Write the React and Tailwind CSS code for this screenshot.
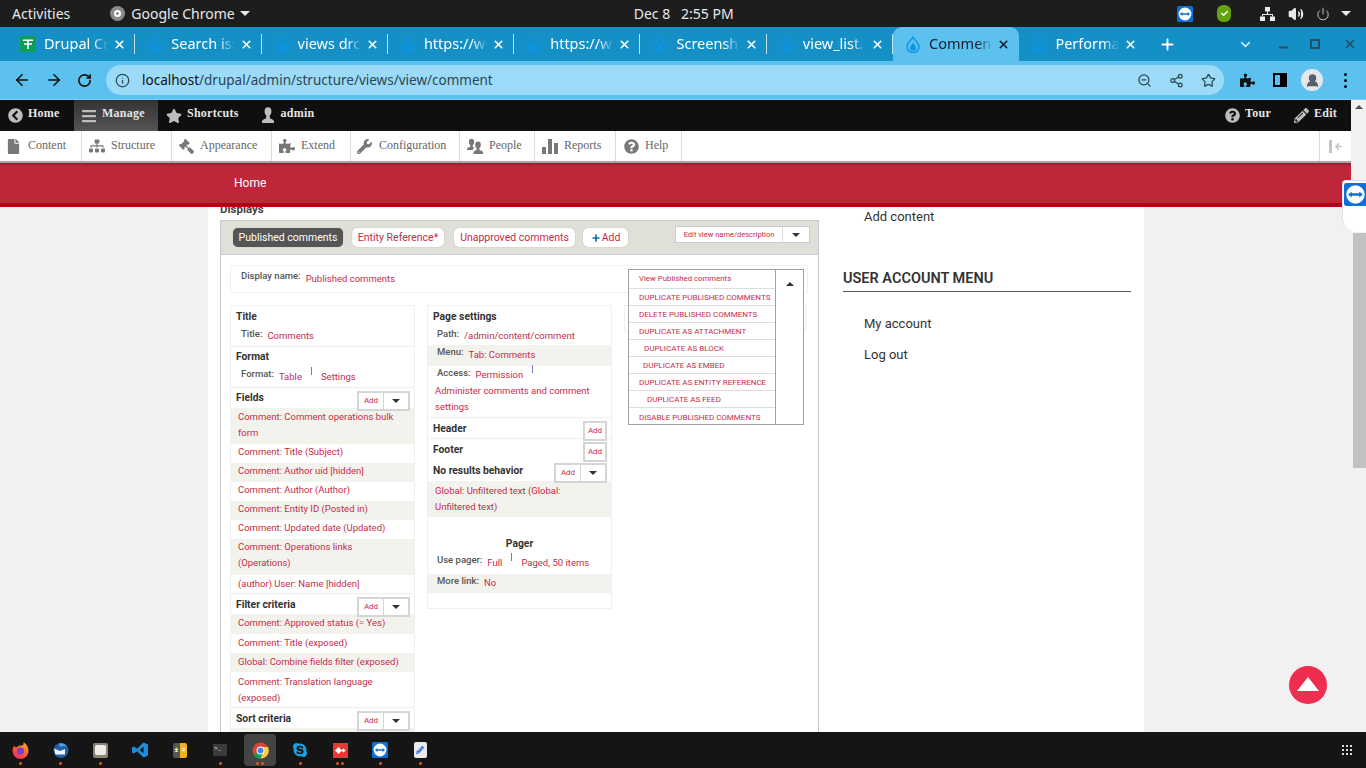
import React from "react";
import {
  ArrowLeft,
  ArrowRight,
  RotateCw,
  Info,
  ZoomOut,
  Share2,
  Star,
  Plus,
  ChevronDown,
  X,
  Minus,
  Volume2,
  Power,
  UserRound,
} from "lucide-react";
import {
  FaChevronCircleLeft,
  FaBars,
  FaStar,
  FaQuestionCircle,
  FaPencilAlt,
  FaFile,
  FaSitemap,
  FaGavel,
  FaPuzzlePiece,
  FaWrench,
  FaSkype,
  FaCheck,
} from "react-icons/fa";

const Drop = () => (
  <svg width="14" height="17" viewBox="0 0 14 17" className="shrink-0">
    <path d="M7 1C8 4 13 6 13 11A6 5.5 0 0 1 1 11C1 6 6 4 7 1Z" fill="none" stroke="#0b95e6" strokeWidth="1.4" />
    <path d="M7 6.5C8 8.5 10 9.8 10 11.8A3 3 0 0 1 4 11.8C4 9.8 6 8.5 7 6.5Z" fill="#0b95e6" />
  </svg>
);

const tabs = [
  { title: "Drupal Cr", sheet: true },
  { title: "Search iss" },
  { title: "views drc" },
  { title: "https://w" },
  { title: "https://w" },
  { title: "Screensh" },
  { title: "view_list." },
  { title: "Commen", active: true },
  { title: "Performa" },
];

const ChromeTab = ({ tab, last }) => (
  <div
    className={`relative flex h-[34px] w-[126.3px] shrink-0 items-center pr-[9px] ${tab.sheet ? "pl-[11px]" : "pl-[13px]"} ${
      tab.active ? "rounded-t-[9px] bg-[#5cc1ef] text-[#10202a]" : "text-white"
    }`}
  >
    {tab.sheet ? (
      <svg width="16" height="16" viewBox="0 0 16 16" className="shrink-0">
        <rect width="16" height="16" rx="1.5" fill="#0f9d58" />
        <path d="M3 3.5h10v1.6H8.8V13H7.2V5.1H3ZM4 7.3h8v1.4H4Z" fill="#fff" />
      </svg>
    ) : (
      <Drop />
    )}
    <span
      className={`relative -top-[1px] w-[64px] overflow-hidden whitespace-nowrap font-['Noto_Sans'] text-[14.5px] leading-[18px] [mask-image:linear-gradient(90deg,#000_75%,transparent)] ${
        tab.sheet ? "ml-[8px]" : "ml-[9px]"
      }`}
    >
      {tab.title}
    </span>
    <X className="ml-auto" size={13} strokeWidth={3} />
    {!tab.active && !last && <div className="absolute right-0 top-[7px] h-[20px] w-px bg-[#bfe3f3]" />}
  </div>
);

const UserIcon = ({ className = "" }) => (
  <svg width="16" height="17" viewBox="0 0 16 17" fill="currentColor" className={className}>
    <ellipse cx="8" cy="4.5" rx="3.4" ry="4.2" />
    <path d="M6.4 8h3.2l.4 3.4c2.4.6 4 1.5 4 3V16H2v-1.6c0-1.5 1.6-2.4 4-3Z" />
  </svg>
);

const PeopleIcon = () => (
  <svg width="16" height="17" viewBox="0 0 16 17" fill="#787878">
    <ellipse cx="4.5" cy="4" rx="2.6" ry="3.2" />
    <path d="M3.4 6.5h2.2l.3 2.4c.7.2 1.2.4 1.6.7-1 .6-1.6 1.4-1.6 2.4H0v-1c0-1 1.2-1.7 3.1-2.1Z" />
    <ellipse cx="11" cy="7" rx="2.8" ry="3.4" />
    <path d="M9.7 10h2.6l.3 2.3c2 .4 3.4 1.1 3.4 2.3V16H6.4v-1.4c0-1.2 1.4-1.9 3-2.3Z" />
  </svg>
);

const ReportsIcon = () => (
  <svg width="16" height="15" viewBox="0 0 16 15" fill="#787878">
    <rect x="0" y="8" width="4" height="7" />
    <rect x="6" y="0" width="4" height="15" />
    <rect x="12" y="4" width="4" height="11" />
  </svg>
);

const menuItems = [
  { label: "Content", icon: FaFile, w: "w-[82px]", size: 15, gap: "pl-[6px] gap-[7px]" },
  { label: "Structure", icon: FaSitemap, w: "w-[90px]", size: 16, gap: "pl-[7px] gap-[6px]" },
  { label: "Appearance", icon: FaGavel, w: "w-[100px]", size: 15, gap: "pl-[7px] gap-[6px]", flip: true },
  { label: "Extend", icon: FaPuzzlePiece, w: "w-[79px]", size: 16, gap: "pl-[7px] gap-[6px]" },
  { label: "Configuration", icon: FaWrench, w: "w-[109px]", size: 15, gap: "pl-[6px] gap-[7px]" },
  { label: "People", icon: PeopleIcon, w: "w-[75px]", gap: "pl-[7px] gap-[6px]" },
  { label: "Reports", icon: ReportsIcon, w: "w-[81px]", gap: "pl-[7px] gap-[6px]" },
  { label: "Help", icon: FaQuestionCircle, w: "w-[66px]", size: 15, gap: "pl-[8px] gap-[6px]" },
];

const Link = ({ children, className = "" }) => <span className={`text-[#c62b4b] ${className}`}>{children}</span>;

const Label = ({ children }) => <span className="font-medium text-[#555]">{children}</span>;

const Caret = () => <span className="h-0 w-0 border-x-[4px] border-t-[4px] border-x-transparent border-t-[#333]" />;

const AddSplit = () => (
  <div className="mt-[3px] flex h-[20px] w-[53px] shrink-0 border-2 border-[#d5d5d5] bg-white">
    <span className="flex w-[25px] items-center justify-center border-r border-[#d5d5d5] text-[8px] text-[#c62b4b]">Add</span>
    <span className="flex flex-1 items-center justify-center">
      <Caret />
    </span>
  </div>
);

const AddOnly = () => (
  <div className="mt-[3px] flex h-[20px] w-[24px] shrink-0 items-center justify-center border-2 border-[#d5d5d5] bg-white text-[8px] text-[#c62b4b]">
    Add
  </div>
);

const Head = ({ title, right, titleTop = "mt-[3px]", className = "" }) => (
  <div className={`relative z-10 flex h-[20px] items-start justify-between pr-[4px] ${className}`}>
    <span className={`${titleTop} text-[10.3px] font-bold leading-[14px] text-[#333]`}>{title}</span>
    {right}
  </div>
);

const Row = ({ children, gray, h = "h-[19px]", className = "" }) => (
  <div className={`${h} pl-[7px] leading-[16px] ${gray ? "bg-[#f3f3ee]" : "bg-white"} ${className}`}>
    <Link>{children}</Link>
  </div>
);

const Setting = ({ label, children, gray, valueTop = "mt-[3px]", className = "" }) => (
  <div className={`flex items-start gap-[5px] ${gray ? "bg-[#f3f3ee]" : ""} ${className}`}>
    <Label>{label}</Label>
    <div className={`${valueTop} flex gap-[9px]`}>{children}</div>
  </div>
);

const Sep = () => <span className="-mt-[3px] h-[8px] w-px self-start bg-[#6a7fb8]" />;

const dropdownRows = [
  { t: "DUPLICATE PUBLISHED COMMENTS", pl: "pl-[10px]" },
  { t: "DELETE PUBLISHED COMMENTS", pl: "pl-[10px]" },
  { t: "DUPLICATE AS ATTACHMENT", pl: "pl-[10px]" },
  { t: "DUPLICATE AS BLOCK", pl: "pl-[15px]" },
  { t: "DUPLICATE AS EMBED", pl: "pl-[14px]" },
  { t: "DUPLICATE AS ENTITY REFERENCE", pl: "pl-[10px]" },
  { t: "DUPLICATE AS FEED", pl: "pl-[18px]" },
  { t: "DISABLE PUBLISHED COMMENTS", pl: "pl-[10px]" },
];

const TeamViewer = ({ size }) => (
  <svg width={size} height={size} viewBox="0 0 16 16">
    <rect width="16" height="16" rx="1.5" fill="#0e6fd6" />
    <circle cx="8" cy="8" r="6.4" fill="#fff" />
    <path d="M2.8 8 5.4 6v1.2h5.2V6l2.6 2-2.6 2V8.8H5.4V10Z" fill="#0e6fd6" />
  </svg>
);

const TopBar = () => (
  <div className="flex h-[27px] items-center bg-[#1d1d1d] font-['Noto_Sans'] text-[14px] text-[#e8e8e8]">
    <span className="ml-[12px]">Activities</span>
    <span className="ml-[40px] flex h-[15px] w-[15px] items-center justify-center rounded-full bg-[#8a8a8a]">
      <span className="h-[7px] w-[7px] rounded-full border-2 border-white" />
    </span>
    <span className="ml-[6px]">Google Chrome</span>
    <span className="ml-[5px] h-0 w-0 border-x-[5px] border-t-[5px] border-x-transparent border-t-[#e8e8e8]" />
    <span className="ml-[384px] whitespace-pre">Dec 8   2:55 PM</span>
    <div className="ml-auto flex items-center">
      <TeamViewer size={16} />
      <span className="ml-[24px] flex h-[17px] w-[14px] items-center justify-center rounded-[6px] bg-[#65a30d] text-white">
        <FaCheck size={7} />
      </span>
      <svg width="15" height="14" viewBox="0 0 15 14" fill="#eee" className="ml-[29px]">
        <rect x="5" y="0" width="5" height="4.5" />
        <rect x="0" y="9.5" width="5" height="4.5" />
        <rect x="10" y="9.5" width="5" height="4.5" />
        <path d="M7 4.5h1V7h5v2.5h-1V8H3v1.5H2V7h5Z" />
      </svg>
      <Volume2 className="ml-[13px]" size={16} fill="#e8e8e8" />
      <Power className="ml-[12px]" size={14} strokeWidth={1.4} />
      <span className="ml-[11px] mr-[15px] h-0 w-0 border-x-[5px] border-t-[5px] border-x-transparent border-t-[#e8e8e8]" />
    </div>
  </div>
);

const TabStrip = () => (
  <div className="flex h-[34px] items-center bg-[#1590c6] pl-[9px]">
    {tabs.map((tab, index) => (
      <ChromeTab key={index} tab={tab} last={index === tabs.length - 1} />
    ))}
    <Plus className="ml-[13px] text-white" size={17} strokeWidth={2.6} />
    <ChevronDown className="ml-[62px] text-[#d5eef9]" size={15} strokeWidth={2.4} />
    <Minus className="ml-[24px] mt-[6px] text-[#24506a]" size={13} strokeWidth={3.4} />
    <span className="ml-[20px] h-[10px] w-[10px] border-2 border-[#24506a]" />
    <X className="ml-[23px] text-[#24506a]" size={14} strokeWidth={3} />
  </div>
);

const AddressBar = () => (
  <div className="flex h-[39px] items-center border-b border-[#7fcdf1] bg-[#5cc1ef] text-[#111]">
    <ArrowLeft className="ml-[13px]" size={18} strokeWidth={2.2} />
    <ArrowRight className="ml-[14px]" size={18} strokeWidth={2.2} />
    <RotateCw className="ml-[14px]" size={15} strokeWidth={2.6} />
    <div className="ml-[14px] flex h-[30px] w-[1118px] items-center rounded-full bg-[#9bdbf7] pl-[9px] pr-[8px] text-[#2c4654]">
      <Info size={15} />
      <span className="ml-[12px] font-['Noto_Sans'] text-[13.5px]">
        <span className="text-[#111]">localhost</span>/drupal/admin/structure/views/view/comment
      </span>
      <ZoomOut className="ml-auto" size={15} />
      <Share2 className="ml-[17px]" size={15} />
      <Star className="ml-[17px]" size={15} />
    </div>
    <FaPuzzlePiece className="ml-[16px]" size={15} />
    <span className="ml-[18px] flex h-[14px] w-[14px] justify-end border-2 border-black">
      <span className="h-full w-[5px] bg-black" />
    </span>
    <span className="ml-[14px] flex h-[22px] w-[22px] items-center justify-center rounded-full bg-[#e4e8ec] text-[#55606c]">
      <UserRound size={15} fill="#55606c" />
    </span>
    <span className="ml-[21px] flex flex-col gap-[3px]">
      <span className="h-[3px] w-[3px] rounded-full bg-black" />
      <span className="h-[3px] w-[3px] rounded-full bg-black" />
      <span className="h-[3px] w-[3px] rounded-full bg-black" />
    </span>
  </div>
);

const ToolbarItem = ({ icon: Icon, label, size = 15, className = "" }) => (
  <div className={`flex h-full items-center ${className}`}>
    <Icon className="text-[#bdbdbd]" size={size} />
    <span className="relative -top-[3px] ml-[5px]">{label}</span>
  </div>
);

const AdminToolbar = () => (
  <div className="flex h-[31px] bg-[#0f0f0f] font-['Liberation_Serif'] text-[12px] font-bold tracking-[0.25px] text-[#e6e6e6]">
    <ToolbarItem icon={FaChevronCircleLeft} label="Home" className="w-[74px] pl-[8px]" />
    <ToolbarItem
      icon={FaBars}
      label="Manage"
      size={16}
      className="w-[84px] bg-gradient-to-b from-[#333] to-[#555] pl-[7px]"
    />
    <ToolbarItem icon={FaStar} label="Shortcuts" size={16} className="pl-[8px]" />
    <ToolbarItem icon={UserIcon} label="admin" className="ml-[21px]" />
    <div className="ml-auto flex h-full">
      <ToolbarItem icon={FaQuestionCircle} label="Tour" />
      <ToolbarItem icon={FaPencilAlt} label="Edit" className="ml-[23px] mr-[14px]" />
    </div>
  </div>
);

const AdminTray = () => (
  <div className="flex h-[32px] border-b-2 border-[#a8a8a8] bg-white font-['Liberation_Serif'] text-[12px] text-[#666]">
    {menuItems.map((item) => (
      <div key={item.label} className={`flex h-full items-center border-r border-[#dcdcdc] ${item.w} ${item.gap}`}>
        <item.icon className={`shrink-0 text-[#787878] ${item.flip ? "-scale-x-100" : ""}`} size={item.size} />
        <span className="relative -top-[1px]">{item.label}</span>
      </div>
    ))}
    <div className="ml-auto flex h-full w-[32px] items-center justify-center border-l border-[#dcdcdc] text-[#c4c4c4]">
      <span className="h-[13px] w-[3px] bg-[#c4c4c4]" />
      <ArrowLeft className="ml-[2px]" size={9} strokeWidth={4} />
    </div>
  </div>
);

const TabPill = ({ children, active, w }) => (
  <span
    className={`flex h-[19px] ${w} items-center justify-center rounded-[5px] text-[10.5px] shadow-[0_0_1px_#999] ${
      active ? "bg-[#555] text-white" : "bg-white text-[#c62b4b]"
    }`}
  >
    {children}
  </span>
);

const Displays = () => (
  <div className="relative ml-[12px] w-[599px]">
    <div className="-mt-[5px] h-[18px] text-[11.5px] font-bold leading-[14px] text-[#444]">Displays</div>
    <div className="h-[600px] border border-[#c8c8c8] bg-white">
      <div className="flex h-[34px] items-start border-b border-[#cfcfcf] bg-[#e0e0d8] pl-[12px] pt-[7px]">
        <TabPill active w="w-[110px]">Published comments</TabPill>
        <span className="ml-[9px]"><TabPill w="w-[92px]">Entity Reference*</TabPill></span>
        <span className="ml-[10px]"><TabPill w="w-[121px]">Unapproved comments</TabPill></span>
        <span className="ml-[8px]">
          <TabPill w="w-[45px]">
            <Plus className="mr-[1px] text-[#0a6eb4]" size={10} strokeWidth={4} />
            <Link>Add</Link>
          </TabPill>
        </span>
        <div className="ml-[47px] -mt-[2px] flex h-[17px] w-[135px] border border-[#ccc] bg-white text-[7.5px]">
          <span className="flex w-[107px] items-center justify-center border-r border-[#ddd] text-[#c62b4b]">
            Edit view name/description
          </span>
          <span className="flex flex-1 items-center justify-center">
            <Caret />
          </span>
        </div>
      </div>

      <div className="mx-[9px] mt-[10px] flex h-[28px] w-[578px] items-start border border-[#f0f0f0] pl-[10px] pt-[3px] text-[9.5px] leading-[14px]">
        <Label>Display name:</Label>
        <Link className="ml-[5px] mt-[3px]">Published comments</Link>
      </div>

      <div className="ml-[9px] mt-[12px] flex items-start gap-[12px] text-[9.5px]">
        {/* left column */}
        <div className="w-[185px] border-x border-t border-[#f0f0f0] leading-[14px]">
          <div className="h-[41px] border-b border-[#eee] pl-[5px]">
            <Head title="Title" titleTop="mt-[4px]" />
            <Setting label="Title:" valueTop="mt-[2px]" className="pl-[5px] pt-[1px]"><Link>Comments</Link></Setting>
          </div>
          <div className="h-[41px] border-b border-[#eee] pl-[5px]">
            <Head title="Format" />
            <Setting label="Format:" className="pl-[5px]">
              <Link>Table</Link>
              <Sep />
              <Link>Settings</Link>
            </Setting>
          </div>
          <Head title="Fields" right={<AddSplit />} className="pl-[5px]" />
          <Row gray h="h-[36px]" className="pt-[1px]">Comment: Comment operations bulk form</Row>
          <Row>Comment: Title (Subject)</Row>
          <Row gray>Comment: Author uid [hidden]</Row>
          <Row>Comment: Author (Author)</Row>
          <Row gray>Comment: Entity ID (Posted in)</Row>
          <Row>Comment: Updated date (Updated)</Row>
          <Row gray h="h-[36px]">Comment: Operations links<br />(Operations)</Row>
          <Row className="border-b border-[#eee] pt-[1px]">(author) User: Name [hidden]</Row>
          <Head title="Filter criteria" right={<AddSplit />} titleTop="mt-[4px]" className="pl-[5px]" />
          <Row gray h="h-[20px]" className="pt-[1px]">Comment: Approved status (= Yes)</Row>
          <Row className="pt-[1px]">Comment: Title (exposed)</Row>
          <Row gray className="pt-[1px]">Global: Combine fields filter (exposed)</Row>
          <Row h="h-[36px]" className="border-b border-[#eee] pt-[2px]">Comment: Translation language (exposed)</Row>
          <Head title="Sort criteria" right={<AddSplit />} titleTop="mt-[4px]" className="pl-[5px]" />
          <Row gray />
        </div>

        {/* middle column */}
        <div className="h-[304px] w-[185px] border border-[#f0f0f0] leading-[14px]">
          <div className="h-[112px] border-b border-[#eee]">
            <div className="pl-[5px]"><Head title="Page settings" titleTop="mt-[4px]" /></div>
            <Setting label="Path:" valueTop="mt-[2px]" className="h-[19px] pl-[9px] pt-[1px]"><Link>/admin/content/comment</Link></Setting>
            <Setting label="Menu:" gray className="h-[21px] pl-[9px]"><Link>Tab: Comments</Link></Setting>
            <Setting label="Access:" valueTop="mt-[2px]" className="h-[17px] pl-[9px]">
              <Link>Permission</Link>
              <Sep />
            </Setting>
            <div className="pl-[7px] leading-[16px]">
              <Link>Administer comments and comment settings</Link>
            </div>
          </div>
          <Head title="Header" right={<AddOnly />} titleTop="mt-[4px]" className="h-[21px] border-b border-[#eee] pl-[5px]" />
          <Head title="Footer" right={<AddOnly />} titleTop="mt-[4px]" className="h-[21px] pl-[5px]" />
          <Head title="No results behavior" right={<AddSplit />} titleTop="mt-[4px]" className="h-[21px] pl-[5px]" />
          <Row gray h="h-[36px]" className="pr-[20px] pt-[2px]">Global: Unfiltered text (Global: Unfiltered text)</Row>
          <div className="pt-[20px] text-center text-[10.3px] font-bold text-[#333]">Pager</div>
          <Setting label="Use pager:" className="mt-[2px] h-[21px] pl-[9px]">
            <Link>Full</Link>
            <Sep />
            <Link>Paged, 50 items</Link>
          </Setting>
          <Setting label="More link:" gray valueTop="mt-[2px]" className="h-[19px] pl-[9px]"><Link>No</Link></Setting>
        </div>

        {/* right column, mostly behind the dropdown */}
        <div className="h-[27px] w-[182px] border border-[#f0f0f0]" />
      </div>

      <div className="absolute left-[408px] top-[62px] flex h-[156px] w-[176px] border border-[#a0a0a0] bg-white font-['Roboto'] text-[8px] text-[#c62b4b]">
        <div className="w-[147px] border-r border-[#a0a0a0]">
          <div className="flex h-[19px] items-center border-b border-[#ddd] pl-[10px] text-[7.8px]">View Published comments</div>
          {dropdownRows.map((row, index) => (
            <div
              key={row.t}
              className={`flex h-[17px] items-center pt-[2px] ${row.pl} ${index < dropdownRows.length - 1 ? "border-b border-[#ddd]" : ""}`}
            >
              {row.t}
            </div>
          ))}
        </div>
        <div className="flex flex-1 justify-center pt-[12px]">
          <span className="h-0 w-0 border-x-[4px] border-b-[4px] border-x-transparent border-b-[#333]" />
        </div>
      </div>
    </div>
  </div>
);

const Sidebar = () => (
  <div className="ml-[24px] w-[288px] text-[13px] leading-[15px] text-[#333]">
    <div className="ml-[21px] mt-[2px]">Add content</div>
    <div className="mt-[45px] border-b border-[#555] pb-[2px] text-[14.5px] font-semibold leading-[20px] text-[#333]">
      USER ACCOUNT MENU
    </div>
    <div className="ml-[21px] mt-[24px]">My account</div>
    <div className="ml-[21px] mt-[16px]">Log out</div>
  </div>
);

const DockIcon = ({ children, dots = 1, active }) => (
  <div className={`relative flex h-[32px] w-[32px] items-center justify-center rounded-[4px] ${active ? "bg-[#444]" : ""}`}>
    {children}
    <div className="absolute bottom-[1px] flex gap-[2px]">
      {Array.from({ length: dots }).map((_, i) => (
        <span key={i} className="h-[3px] w-[3px] rounded-full bg-[#e95420]" />
      ))}
    </div>
  </div>
);

const Dock = () => (
  <div className="flex h-[36px] items-center bg-[#151515] pl-[4px]">
    <div className="flex gap-[8px]">
      <DockIcon>
        <svg width="17" height="17" viewBox="0 0 17 17">
          <defs>
            <linearGradient id="fx" x1="0.8" y1="0" x2="0.2" y2="1">
              <stop offset="0" stopColor="#ffb01f" />
              <stop offset="0.5" stopColor="#ff5f2c" />
              <stop offset="1" stopColor="#e8246d" />
            </linearGradient>
          </defs>
          <path d="M11.5 0c3.5 2.5 5 5.5 5 9A8 8 0 0 1 .5 9c0-2 .6-3.8 1.8-5.2C3 5 3.6 5.5 4.5 5.6 5.5 3.5 9 3.5 11 3.2 11.6 2 11.8 1 11.5 0Z" fill="url(#fx)" />
          <circle cx="8.5" cy="9" r="3.6" fill="#7a3fd1" />
        </svg>
      </DockIcon>
      <DockIcon>
        <svg width="17" height="17" viewBox="0 0 17 17">
          <circle cx="9" cy="8.5" r="7.5" fill="#1f5fa8" />
          <path d="M7 1.5c3-1 6 0 8 3-3-1-5-.5-7 .5Z" fill="#4fa3e0" />
          <path d="M2 6.5 8 9l5-2v5.5H3.5Z" fill="#eef3f9" />
        </svg>
      </DockIcon>
      <DockIcon>
        <span className="flex h-[15px] w-[15px] items-center justify-center rounded-[2px] bg-[#8c8577]">
          <span className="h-[10px] w-[11px] rounded-[2px] bg-[#eeece6]" />
        </span>
      </DockIcon>
      <DockIcon dots={0}>
        <svg width="16" height="16" viewBox="0 0 16 16" fill="#1f8ed8">
          <path d="M11.5 0.5 16 2.6v10.8l-4.5 2.1L5 9.2 2 11.5 0 10.4V5.6l2-1.1L5 6.8ZM11.5 4.8 7.6 8l3.9 3.2Z" />
        </svg>
      </DockIcon>
      <DockIcon dots={0}>
        <span className="grid h-[15px] w-[14px] grid-cols-2 overflow-hidden rounded-[2px] text-center text-[7px] font-bold leading-[15px]">
          <span className="bg-[#555] text-white">±</span>
          <span className="bg-[#f2b21a] text-white">=</span>
        </span>
      </DockIcon>
      <DockIcon>
        <span className="flex h-[12px] w-[14px] items-start rounded-[1px] bg-[#3b3b3b] pl-[1px] font-['Liberation_Mono'] text-[6px] leading-[9px] text-white">
          &gt;_
        </span>
      </DockIcon>
      <DockIcon dots={2} active>
        <svg width="17" height="17" viewBox="0 0 17 17">
          <circle cx="8.5" cy="8.5" r="8" fill="#db4437" />
          <path d="M8.5 8.5 1.6 12.5A8 8 0 0 0 8.5 16.5L12.5 9.5Z" fill="#0f9d58" />
          <path d="M8.5 5H16A8 8 0 0 1 8.5 16.5L12 8.5Z" fill="#ffcd40" />
          <circle cx="8.5" cy="8.5" r="3.9" fill="#fff" />
          <circle cx="8.5" cy="8.5" r="3" fill="#4285f4" />
        </svg>
      </DockIcon>
      <DockIcon>
        <FaSkype className="text-[#16a3e8]" size={16} />
      </DockIcon>
      <DockIcon dots={2}>
        <span className="flex h-[15px] w-[15px] items-center justify-center bg-[#e53935]">
          <span className="h-[5px] w-[5px] rotate-45 bg-white" />
          <span className="ml-[1px] h-[3px] w-[3px] rotate-45 bg-white" />
        </span>
      </DockIcon>
      <DockIcon>
        <TeamViewer size={16} />
      </DockIcon>
      <DockIcon>
        <span className="flex h-[16px] w-[13px] items-center justify-center rounded-[2px] bg-[#e8eaf0]">
          <FaPencilAlt className="text-[#2c6fd6]" size={8} />
        </span>
      </DockIcon>
    </div>
    <div className="ml-auto mr-[14px] grid grid-cols-3 gap-[2px]">
      {Array.from({ length: 9 }).map((_, i) => (
        <span key={i} className="h-[2px] w-[2px] bg-[#ddd]" />
      ))}
    </div>
  </div>
);

export default function App() {
  return (
    <div className="relative h-[768px] w-[1366px] overflow-hidden bg-[#f1f1f1] font-['Roboto',sans-serif]">
      <TopBar />
      <TabStrip />
      <AddressBar />
      <div className="flex h-[632px]">
        <div className="w-[1351px] shrink-0">
          <AdminToolbar />
          <AdminTray />
          <div className="h-[40px] bg-[linear-gradient(#8c1c2a,#bf2639_3px)] pl-[234px] pt-[12px] text-[12px] leading-[16px] text-white">
            Home
          </div>
          <div className="h-[4px] bg-[#b30012]" />
          <div className="h-[525px] overflow-hidden">
            <div className="ml-[208px] flex h-full w-[936px] bg-white">
              <Displays />
              <Sidebar />
            </div>
          </div>
        </div>
        <div className="flex-1 bg-[#f1f1f1]">
          <div className="flex h-[14px] items-center justify-center">
            <span className="h-0 w-0 border-x-[4px] border-b-[4px] border-x-transparent border-b-[#505050]" />
          </div>
          <div className="ml-[2px] mt-[119px] h-[235px] bg-[#c1c1c1]" />
        </div>
      </div>
      <Dock />

      {/* teamviewer side tab */}
      <div className="absolute left-[1342px] top-[180px] h-[52px] w-[24px] rounded-tl-[4px] rounded-bl-[14px] border-l border-t border-[#dbe3ec] bg-white pl-[1px] pt-[2px]">
        <TeamViewer size={23} />
      </div>

      {/* back to top */}
      <div className="absolute left-[1289px] top-[666px] flex h-[38px] w-[38px] items-center justify-center rounded-full bg-[#ef2d4f]">
        <span className="-mt-[2px] h-0 w-0 border-x-[11px] border-b-[14px] border-x-transparent border-b-white" />
      </div>
    </div>
  );
}
